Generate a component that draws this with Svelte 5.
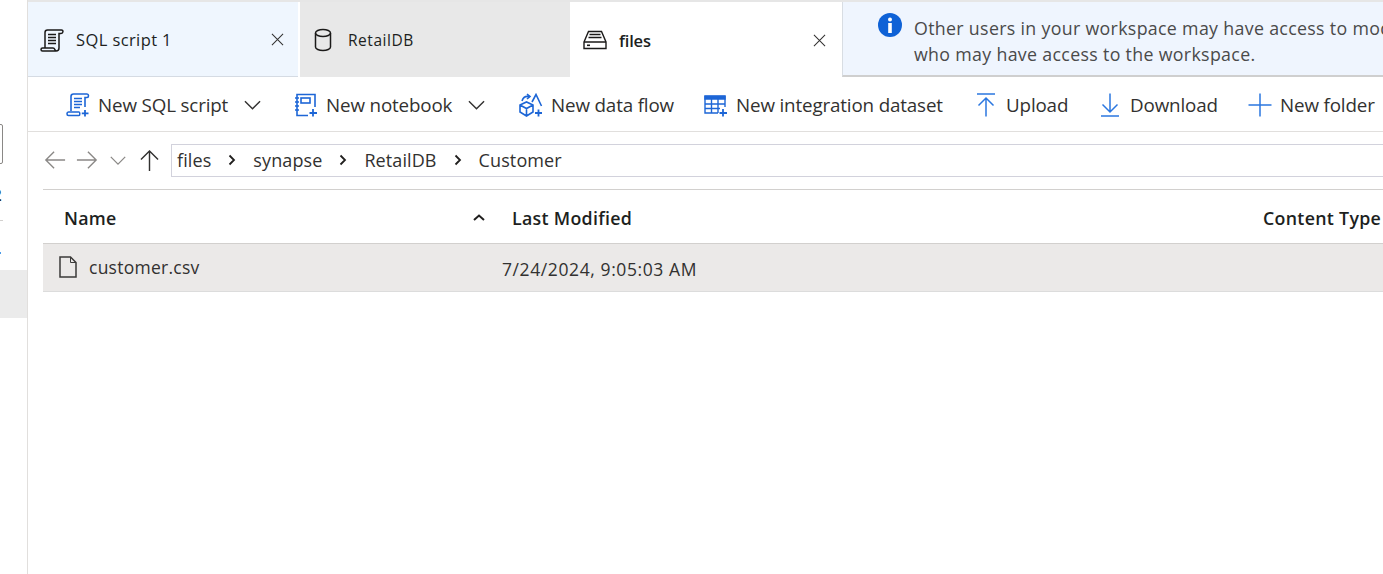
<script lang="ts">
  let columns = ["Name", "Last Modified", "Content Type"];
  let crumbs = ["files", "synapse", "RetailDB", "Customer"];
</script>

<div class="page">
  <aside class="side">
    <div class="side-box"></div>
    <div class="side-num">2</div>
    <div class="side-line"></div>
    <div class="side-tick"></div>
    <div class="side-active"></div>
  </aside>

  <main class="main">
    <div class="tabs">
      <div class="tab tab-blue">
        <svg class="tab-icon" viewBox="0 0 24 24" fill="none" stroke="#1b1a19" stroke-width="1.5">
          <path d="M5 20V4.500C5 3 6 2 7.500 2H21.500C23.500 2 23.500 5.500 21 5.500H19V20C19 22 18 23 16 23H2.500C0.500 23 0.500 20 2.500 20H13C15 20 15 23 16 23" />
          <path d="M8 6.500H16M8 9.500H16M8 12.500H16M8 15.500H16" stroke-width="1.600" />
        </svg>
        <span class="tab-label">SQL script 1</span>
        <svg class="close" viewBox="0 0 14 14" stroke="#323130" stroke-width="1.100"><path d="M1 1L13 13M13 1L1 13" /></svg>
      </div>
      <div class="tab tab-gray">
        <svg class="tab-icon db" viewBox="0 0 18 24" fill="none" stroke="#1b1a19" stroke-width="1.500">
          <ellipse cx="9" cy="5" rx="7.500" ry="3.500" />
          <path d="M1.500 5V19C1.500 21 5 22.500 9 22.500S16.500 21 16.500 19V5" />
        </svg>
        <span class="tab-label small">RetailDB</span>
      </div>
      <div class="tab tab-white">
        <svg class="tab-icon" viewBox="0 0 24 20" fill="none" stroke="#1b1a19" stroke-width="1.400">
          <path d="M1 12L5.500 1.500H18.500L23 12V18.500H1Z" />
          <path d="M1 12H23M6.500 4.500H17.500M5.500 7.500H18.500" />
          <path d="M4 15.300H7" stroke-width="1.600" />
        </svg>
        <span class="tab-label strong">files</span>
        <svg class="close" viewBox="0 0 14 14" stroke="#323130" stroke-width="1.100"><path d="M1 1L13 13M13 1L1 13" /></svg>
      </div>
      <div class="notice">
        <svg class="info" viewBox="0 0 24 24">
          <circle cx="12" cy="12" r="12" fill="#0f62d6" />
          <circle cx="12" cy="6.500" r="2" fill="#fff" />
          <rect x="10.200" y="10" width="3.600" height="10" fill="#fff" />
        </svg>
        <p>Other users in your workspace may have access to modify this. Manage who<br />who may have access to the workspace.</p>
      </div>
    </div>

    <div class="toolbar">
      <button class="cmd w-script">
        <svg viewBox="0 0 24 24" fill="none" stroke="#1d66d6" stroke-width="1.600">
          <path d="M5 18V3.500C5 2 6 1 7.500 1H21C23 1 23 4.500 21 4.500H19V14M5 22.500H2.500C0.500 22.500 0.500 19 2.500 19H13C14 19 14 22.500 13 22.500H5" />
          <path d="M8 5.500H16M8 8.500H16M8 11.500H16M8 14.500H14" />
          <path d="M19 17V23.500M15.800 20.300H22.500" stroke-width="1.800" />
        </svg>
        <span>New SQL script</span>
        <svg class="chev" viewBox="0 0 18 10" fill="none" stroke="#323130" stroke-width="1.500"><path d="M1 1L9 9L17 1" /></svg>
      </button>
      <button class="cmd w-notebook">
        <svg viewBox="0 0 24 24" fill="none" stroke="#1d66d6" stroke-width="1.600">
          <path d="M14 22.500H3V1.500H21V14" />
          <rect x="7" y="5" width="9" height="5" />
          <path d="M1 5H5M1 9H5M1 13H5M1 17H5" />
          <path d="M19 16V23.500M15.500 20H23" stroke-width="1.800" />
        </svg>
        <span>New notebook</span>
        <svg class="chev" viewBox="0 0 18 10" fill="none" stroke="#323130" stroke-width="1.500"><path d="M1 1L9 9L17 1" /></svg>
      </button>
      <button class="cmd w-flow">
        <svg viewBox="0 0 24 24" fill="none" stroke="#1d66d6" stroke-width="1.600">
          <path d="M1 12L7.500 9L14 12V19L7.500 23L1 19ZM1 12L7.500 15.500L14 12M7.500 15.500V23" />
          <path d="M3 8C4 4.500 7 3 10 3.500M8 1L11 3.500L8 6" />
          <path d="M13 9L17 1.500L22.500 13" />
          <path d="M19.500 16.500V23.500M16 20H23" stroke-width="1.800" />
        </svg>
        <span>New data flow</span>
      </button>
      <button class="cmd w-dataset">
        <svg viewBox="0 0 24 24" fill="none" stroke="#1d66d6" stroke-width="1.400">
          <path d="M14 20H1V3H21V14" />
          <path d="M1 3.500H21V6H1Z" fill="#1d66d6" />
          <path d="M1 11H21M1 15.500H16M7.500 6V20M14 6V20" />
          <path d="M19 16V23.500M15.500 20H23" stroke-width="1.800" />
        </svg>
        <span>New integration dataset</span>
      </button>
      <button class="cmd w-upload">
        <svg viewBox="0 0 24 24" fill="none" stroke="#2b77e0" stroke-width="1.500">
          <path d="M3 1H21M12 23.500V5M4.500 12.500L12 5L19.500 12.500" />
        </svg>
        <span>Upload</span>
      </button>
      <button class="cmd w-download">
        <svg viewBox="0 0 24 24" fill="none" stroke="#2b77e0" stroke-width="1.500">
          <path d="M3 23H21M12 0.500V19M4.500 11.500L12 19L19.500 11.500" />
        </svg>
        <span>Download</span>
      </button>
      <button class="cmd w-folder">
        <svg viewBox="0 0 24 24" fill="none" stroke="#2b77e0" stroke-width="1.500">
          <path d="M12 0.500V23.500M0.500 12H23.500" />
        </svg>
        <span>New folder</span>
      </button>
    </div>

    <div class="content">
      <div class="nav">
        <svg class="nav-back" viewBox="0 0 24 24" fill="none" stroke="#8a8886" stroke-width="1.500"><path d="M23 12H2M11 3L2 12L11 21" /></svg>
        <svg class="nav-fwd" viewBox="0 0 24 24" fill="none" stroke="#8a8886" stroke-width="1.500"><path d="M1 12H22M13 3L22 12L13 21" /></svg>
        <svg class="nav-down" viewBox="0 0 18 10" fill="none" stroke="#8a8886" stroke-width="1.400"><path d="M1 1L9 9L17 1" /></svg>
        <svg class="nav-up" viewBox="0 0 20 24" fill="none" stroke="#323130" stroke-width="1.500"><path d="M10 23V2M1 11L10 2L19 11" /></svg>
        <div class="path">
          {#each crumbs as crumb, i}
            <span class="crumb">{crumb}</span>
            {#if i < crumbs.length - 1}
              <svg class="sep" viewBox="0 0 8 12" fill="none" stroke="#201f1e" stroke-width="1.800"><path d="M1.500 1.500L6 6L1.500 10.500" /></svg>
            {/if}
          {/each}
        </div>
      </div>

      <div class="head">
        <div class="col-name">
          <span>{columns[0]}</span>
          <svg class="sort" viewBox="0 0 12 7" fill="none" stroke="#201f1e" stroke-width="2"><path d="M1 6L6 1.500L11 6" /></svg>
        </div>
        <div class="col-mod">{columns[1]}</div>
        <div class="col-type">{columns[2]}</div>
      </div>

      <div class="row">
        <div class="file">
          <svg class="file-icon" viewBox="0 0 18 22" fill="none" stroke="#3b3a39" stroke-width="1.500">
            <path d="M1 1H11.500L17 6.500V21H1Z" />
            <path d="M11.500 1V6.500H17" stroke-width="1" />
          </svg>
          <span>customer.csv</span>
        </div>
        <div class="modified">7/24/2024, 9:05:03 AM</div>
      </div>
    </div>
  </main>
</div>

<style>
  :global(body) {
    margin: 0;
    background: #fff;
    overflow: hidden;
  }

  .page {
    display: flex;
    width: 1383px;
    height: 574px;
    overflow: hidden;
    font-family: "Open Sans", "Noto Sans", sans-serif;
    color: #323130;
  }

  .side {
    position: relative;
    flex: 0 0 27px;
    border-right: 1px solid #e1dfdd;
  }

  .side-box {
    position: absolute;
    left: -4px;
    top: 124px;
    width: 5px;
    height: 38px;
    border: 1px solid #8a8886;
    border-radius: 2px;
  }

  .side-num {
    position: absolute;
    left: -8px;
    top: 183px;
    font-size: 17px;
    font-weight: 600;
    color: #201f1e;
  }

  .side-line {
    position: absolute;
    left: 0;
    top: 220px;
    width: 3px;
    height: 1px;
    background: #d2d0ce;
  }

  .side-tick {
    position: absolute;
    left: 0;
    top: 252px;
    width: 1px;
    height: 2px;
    background: #4a9be8;
  }

  .side-active {
    position: absolute;
    left: 0;
    top: 270px;
    width: 27px;
    height: 48px;
    background: #ebebeb;
  }

  .main {
    flex: 1;
    min-width: 0;
    display: flex;
    flex-direction: column;
  }

  .tabs {
    display: flex;
    height: 77px;
    box-sizing: border-box;
    border-top: 2px solid #e6e6e6;
    flex: none;
  }

  .tab {
    flex: none;
    width: 270px;
    box-sizing: border-box;
    display: flex;
    align-items: center;
    padding: 1px 14px 0 12px;
  }

  .tab-blue {
    background: #eff6fe;
    border-bottom: 1px solid #d5dbe3;
  }

  .tab-gray {
    margin-left: 2px;
    background: #e8e8e8;
    padding-left: 14px;
  }

  .tab-white {
    margin-left: 1px;
    background: #fff;
    padding-right: 15px;
  }

  .tab-icon {
    width: 24px;
    height: 24px;
    flex: none;
  }

  .tab-icon.db {
    width: 18px;
    height: 24px;
    margin-right: 3px;
  }

  .tab-label {
    flex: 1;
    margin-left: 12px;
    font-size: 16.500px;
    letter-spacing: 0.400px;
    color: #201f1e;
    white-space: nowrap;
  }

  .tab-label.small {
    font-size: 15.500px;
    letter-spacing: 0.550px;
    margin-left: 13px;
  }

  .tab-label.strong {
    font-weight: 600;
    letter-spacing: -0.200px;
  }

  .close {
    width: 13px;
    height: 13px;
    flex: none;
  }

  .notice {
    flex: 1;
    min-width: 0;
    margin-left: 1px;
    display: flex;
    align-items: flex-start;
    padding: 11px 0 0 35px;
    background: #eff5fe;
    border-bottom: 2px solid #cfcfcf;
    border-left: 1px solid #d8dde3;
    overflow: hidden;
    box-sizing: border-box;
  }

  .info {
    flex: none;
    width: 24px;
    height: 24px;
    margin-right: 12px;
  }

  .notice p {
    margin: 2px 0 0;
    font-size: 17.800px;
    line-height: 26px;
    letter-spacing: 0.320px;
    color: #4a4a4a;
    white-space: nowrap;
  }

  .toolbar {
    flex: none;
    height: 55px;
    box-sizing: border-box;
    display: flex;
    align-items: center;
    padding: 1px 0 0 38px;
    border-bottom: 1px solid #e1dfdd;
    white-space: nowrap;
  }

  .cmd {
    flex: none;
    display: flex;
    align-items: center;
    padding: 0;
    border: 0;
    background: none;
    font: inherit;
    font-size: 18.800px;
    letter-spacing: -0.150px;
    color: #323130;
  }

  .cmd svg:first-child {
    width: 24px;
    height: 24px;
    margin-right: 8px;
    flex: none;
  }

  .cmd .chev {
    width: 17px;
    height: 10px;
    margin-left: 16px;
  }

  .w-script { width: 228px; }
  .w-notebook { width: 225px; }
  .w-flow { width: 185px; }
  .w-dataset { width: 270px; }
  .w-upload { width: 124px; }
  .w-download { width: 150px; }
  .w-folder { width: 128px; }

  .content {
    margin-left: 15px;
    flex: 1;
  }

  .nav {
    display: flex;
    align-items: center;
    height: 58px;
    padding: 0 0 1px 1px;
    box-sizing: border-box;
    border-bottom: 1px solid #d2d0ce;
  }

  .nav svg {
    flex: none;
  }

  .nav-back,
  .nav-fwd {
    width: 22px;
    height: 22px;
  }

  .nav-back {
    margin-right: 10px;
  }

  .nav-fwd {
    margin-right: 11px;
  }

  .nav-down {
    width: 18px;
    height: 9px;
    margin-right: 13px;
  }

  .nav-up {
    width: 19px;
    height: 23px;
    margin-right: 12px;
  }

  .path {
    flex: 1;
    height: 33px;
    box-sizing: border-box;
    display: flex;
    align-items: center;
    padding: 0 0 1px 5px;
    gap: 17px;
    border: 1px solid #d2d2dc;
    border-right: 0;
    font-size: 18px;
    letter-spacing: 0.100px;
    color: #323130;
  }

  .sep {
    width: 8px;
    height: 12px;
  }

  .head {
    display: flex;
    align-items: center;
    height: 54px;
    box-sizing: border-box;
    padding: 2px 0 0 21px;
    font-size: 17.800px;
    font-weight: 600;
    letter-spacing: 0.300px;
    color: #201f1e;
    border-bottom: 1px solid #d2d0ce;
  }

  .col-name {
    flex: none;
    width: 448px;
    display: flex;
    align-items: center;
    justify-content: space-between;
    padding-right: 27px;
    box-sizing: border-box;
  }

  .sort {
    width: 12px;
    height: 7px;
  }

  .col-mod {
    flex: none;
    width: 751px;
  }

  .col-type {
    flex: none;
    white-space: nowrap;
  }

  .row {
    display: flex;
    align-items: center;
    height: 48px;
    box-sizing: border-box;
    background: #ebe9e8;
    border-bottom: 1px solid #dcdcdc;
    font-size: 17.500px;
    letter-spacing: 0.250px;
    color: #323130;
  }

  .file {
    flex: none;
    width: 459px;
    display: flex;
    align-items: center;
    padding-left: 16px;
    box-sizing: border-box;
    margin-top: -1px;
  }

  .file-icon {
    width: 18px;
    height: 22px;
    margin-right: 12px;
    flex: none;
  }

  .modified {
    flex: none;
    padding-top: 2px;
    letter-spacing: 0.600px;
  }
</style>
